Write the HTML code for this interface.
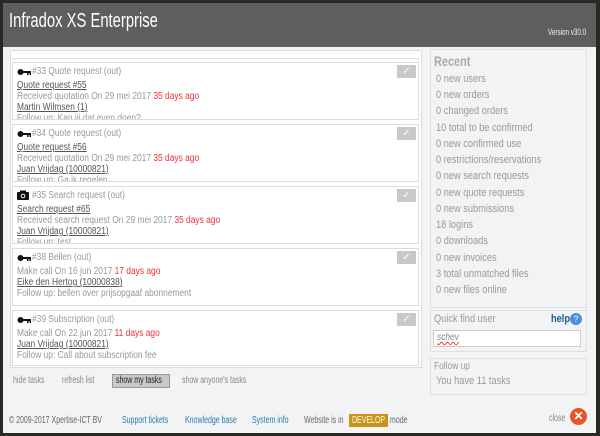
<!DOCTYPE html>
<html><head><style>
*{margin:0;padding:0;box-sizing:border-box}
body{width:600px;height:436px;background:#2a2822;position:relative;overflow:hidden;font-family:"Liberation Sans",sans-serif}
.win{position:absolute;left:3px;top:3px;width:593px;height:430px;background:#f2f3f4}
.bar{position:absolute;left:3px;top:3px;width:593px;height:44px;background:#5e5e5e}
.t{position:absolute;white-space:nowrap;transform-origin:0 0;transform:scaleX(.7);font-size:10px;color:#999;line-height:12px}
.c{transform:scaleX(.84)}
.u{text-decoration:underline;color:#555}
.r{color:#f0303a}
.card{position:absolute;left:12px;width:407px;background:#fff;border:1px solid #dcdcdc}
.chk{position:absolute;left:397px;width:19px;height:13px;background:#c8c8c8;color:#fff;font-size:10px;text-align:center;line-height:13px}
.box{position:absolute;border:1px solid #dfe0e2;background:#f2f3f4}
.rc{position:absolute;white-space:nowrap;transform-origin:0 0;transform:scaleX(.84);font-size:11px;color:#999}
.lk{color:#2a7bb0}
</style></head><body>
<div class="win"></div>
<div class="bar"></div>
<div style="position:absolute;left:9px;top:10px;font-size:20px;color:#fff;white-space:nowrap;transform-origin:0 0;transform:scaleX(.74)">Infradox XS Enterprise</div>
<div class="t" style="left:548px;top:26px;color:#eee;font-size:9px">Version v30.0</div>

<div style="position:absolute;left:10px;top:50px;width:412px;height:318px;border:1px solid #dcdcdc;background:#fff"></div>
<div style="position:absolute;left:12px;top:58px;width:407px;height:1px;background:#dcdcdc"></div>

<div class="card" style="top:62px;height:58px"></div>
<div class="card" style="top:124px;height:58px"></div>
<div class="card" style="top:186px;height:58px"></div>
<div class="card" style="top:248px;height:58px"></div>
<div class="card" style="top:310px;height:56px"></div>
<div class="chk" style="top:65px">✓</div>
<div class="chk" style="top:127px">✓</div>
<div class="chk" style="top:189px">✓</div>
<div class="chk" style="top:251px">✓</div>
<div class="chk" style="top:313px">✓</div>

<svg style="position:absolute;left:17px;top:68px" width="14" height="8"><circle cx="3.5" cy="4" r="3" fill="#111"/><rect x="5" y="3" width="9" height="2" fill="#111"/><rect x="10" y="4" width="1.5" height="3" fill="#111"/><rect x="12.5" y="4" width="1.5" height="3" fill="#111"/></svg>
<svg style="position:absolute;left:17px;top:130px" width="14" height="8"><circle cx="3.5" cy="4" r="3" fill="#111"/><rect x="5" y="3" width="9" height="2" fill="#111"/><rect x="10" y="4" width="1.5" height="3" fill="#111"/><rect x="12.5" y="4" width="1.5" height="3" fill="#111"/></svg>
<svg style="position:absolute;left:17px;top:190px" width="12" height="10"><rect x="0" y="2" width="12" height="8" rx="1" fill="#111"/><rect x="3" y="0.5" width="6" height="2" fill="#111"/><circle cx="6" cy="6" r="2.3" fill="#fff"/><circle cx="6" cy="6" r="1.4" fill="#111"/></svg>
<svg style="position:absolute;left:17px;top:254px" width="14" height="8"><circle cx="3.5" cy="4" r="3" fill="#111"/><rect x="5" y="3" width="9" height="2" fill="#111"/><rect x="10" y="4" width="1.5" height="3" fill="#111"/><rect x="12.5" y="4" width="1.5" height="3" fill="#111"/></svg>
<svg style="position:absolute;left:17px;top:316px" width="14" height="8"><circle cx="3.5" cy="4" r="3" fill="#111"/><rect x="5" y="3" width="9" height="2" fill="#111"/><rect x="10" y="4" width="1.5" height="3" fill="#111"/><rect x="12.5" y="4" width="1.5" height="3" fill="#111"/></svg>

<div class="t c" style="left:32px;top:66px">#33 Quote request (out)</div>
<div class="t c u" style="left:17px;top:80px">Quote request #55</div>
<div class="t c" style="left:17px;top:91px">Received quotation On 29 mei 2017 <span class="r">35 days ago</span></div>
<div class="t c u" style="left:17px;top:102px">Martin Wilmsen (1)</div>
<div style="position:absolute;left:13px;top:113px;width:405px;height:6px;overflow:hidden"><div class="t c" style="left:4px;top:0">Follow up: Kan jij dat even doen?</div></div>

<div class="t c" style="left:32px;top:128px">#34 Quote request (out)</div>
<div class="t c u" style="left:17px;top:142px">Quote request #56</div>
<div class="t c" style="left:17px;top:153px">Received quotation On 29 mei 2017 <span class="r">35 days ago</span></div>
<div class="t c u" style="left:17px;top:164px">Juan Vrijdag (10000821)</div>
<div style="position:absolute;left:13px;top:175px;width:405px;height:6px;overflow:hidden"><div class="t c" style="left:4px;top:0">Follow up: Ga ik regelen</div></div>

<div class="t c" style="left:32px;top:190px">#35 Search request (out)</div>
<div class="t c u" style="left:17px;top:204px">Search request #65</div>
<div class="t c" style="left:17px;top:215px">Received search request On 29 mei 2017 <span class="r">35 days ago</span></div>
<div class="t c u" style="left:17px;top:226px">Juan Vrijdag (10000821)</div>
<div style="position:absolute;left:13px;top:237px;width:405px;height:6px;overflow:hidden"><div class="t c" style="left:4px;top:0">Follow up: test</div></div>

<div class="t c" style="left:32px;top:252px">#38 Bellen (out)</div>
<div class="t c" style="left:17px;top:266px">Make call On 16 jun 2017 <span class="r">17 days ago</span></div>
<div class="t c u" style="left:17px;top:277px">Eike den Hertog (10000838)</div>
<div class="t c" style="left:17px;top:288px">Follow up: bellen over prijsopgaaf abonnement</div>

<div class="t c" style="left:32px;top:314px">#39 Subscription (out)</div>
<div class="t c" style="left:17px;top:328px">Make call On 22 jun 2017 <span class="r">11 days ago</span></div>
<div class="t c u" style="left:17px;top:339px">Juan Vrijdag (10000821)</div>
<div class="t c" style="left:17px;top:350px">Follow up: Call about subscription fee</div>

<div class="t" style="left:13px;top:375px;color:#888">hide tasks</div>
<div class="t" style="left:62px;top:375px;color:#888">refresh list</div>
<div style="position:absolute;left:112px;top:374px;width:58px;height:14px;background:#c8c8c8;border:1px solid #999"></div>
<div class="t" style="left:116px;top:375px;color:#222">show my tasks</div>
<div class="t" style="left:182px;top:375px;color:#888">show anyone's tasks</div>

<div class="box" style="left:430px;top:49px;width:157px;height:259px"></div>
<div class="rc" style="left:434px;top:53px;font-size:14px;font-weight:bold;color:#aaa;transform:scaleX(.78)">Recent</div>
<div class="rc" style="left:436px;top:73px">0 new users</div>
<div class="rc" style="left:436px;top:89px">0 new orders</div>
<div class="rc" style="left:436px;top:105px">0 changed orders</div>
<div class="rc" style="left:436px;top:122px">10 total to be confirmed</div>
<div class="rc" style="left:436px;top:138px">0 new confirmed use</div>
<div class="rc" style="left:436px;top:154px">0 restrictions/reservations</div>
<div class="rc" style="left:436px;top:170px">0 new search requests</div>
<div class="rc" style="left:436px;top:187px">0 new quote requests</div>
<div class="rc" style="left:436px;top:203px">0 new submissions</div>
<div class="rc" style="left:436px;top:219px">18 logins</div>
<div class="rc" style="left:436px;top:235px">0 downloads</div>
<div class="rc" style="left:436px;top:252px">0 new invoices</div>
<div class="rc" style="left:436px;top:268px">3 total unmatched files</div>
<div class="rc" style="left:436px;top:284px">0 new files online</div>

<div class="box" style="left:430px;top:310px;width:157px;height:42px"></div>
<div class="rc" style="left:434px;top:313px">Quick find user</div>
<div class="rc" style="left:551px;top:313px;color:#1f5f8f;font-weight:bold">help</div>
<div style="position:absolute;left:570px;top:313px;width:12px;height:12px;border-radius:50%;background:#4a8fd8;color:#fff;font-size:9px;text-align:center;line-height:12px">?</div>
<div style="position:absolute;left:433px;top:330px;width:148px;height:17px;background:#fff;border:1px solid #ccc"></div>
<div class="rc" style="left:437px;top:332px;font-style:italic;color:#888;font-size:10px;text-decoration:underline wavy #e33">schev</div>

<div class="box" style="left:430px;top:358px;width:157px;height:37px"></div>
<div class="rc" style="left:434px;top:361px;font-size:10px">Follow up</div>
<div class="rc" style="left:436px;top:375px">You have 11 tasks</div>

<div class="t" style="left:9px;top:415px;color:#666">© 2009-2017 Xpertise-ICT BV</div>
<div class="t lk" style="left:122px;top:415px">Support tickets</div>
<div class="t lk" style="left:185px;top:415px">Knowledge base</div>
<div class="t lk" style="left:252px;top:415px">System info</div>
<div class="t" style="left:304px;top:415px;color:#666">Website is in</div>
<div style="position:absolute;left:349px;top:414px;width:39px;height:13px;background:#c99315"></div>
<div class="t" style="left:352px;top:415px;color:#fff">DEVELOP</div>
<div class="t" style="left:390px;top:415px;color:#666">mode</div>
<div class="t" style="left:549px;top:413px;color:#888">close</div>
<div style="position:absolute;left:570px;top:408px;width:17px;height:17px;border-radius:50%;background:#e8542a;color:#fff;font-size:12px;font-weight:bold;text-align:center;line-height:17px">✕</div>
</body></html>
